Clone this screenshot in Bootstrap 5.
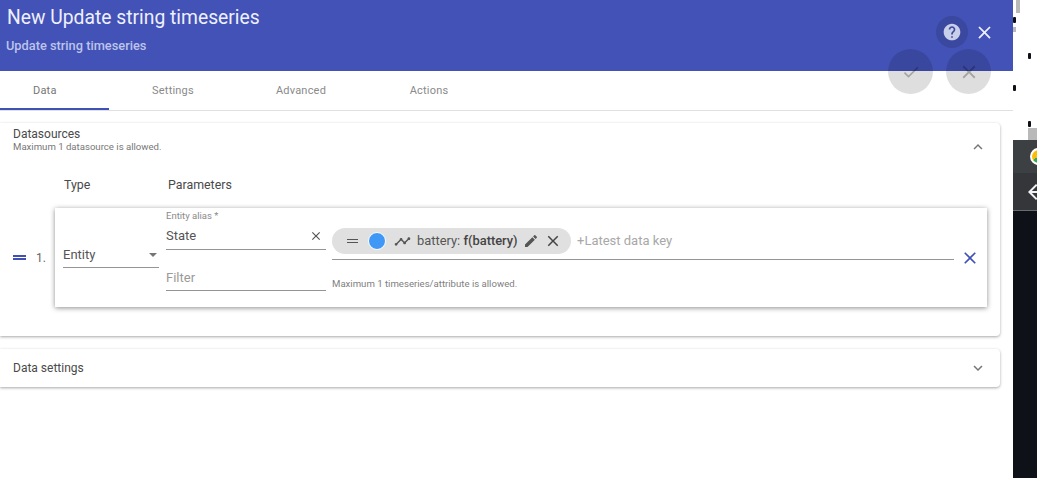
<!DOCTYPE html>
<html lang="en">
<head>
    <meta charset="UTF-8">
    <meta name="viewport" content="width=device-width, initial-scale=1.0">
    <title>New Update string timeseries</title>
    <link href="https://cdn.jsdelivr.net/npm/bootstrap@5.3.0/dist/css/bootstrap.min.css" rel="stylesheet">
    <style>
        html, body { height: 478px; overflow: hidden; background: #fff; }
        body { font-family: Roboto, "Liberation Sans", sans-serif; color: #333; }
        svg { fill: currentColor; display: block; flex: none; }
        .page-shell { height: 478px; }
        .dialog-main { width: 1013px; flex: none; position: relative; }
        .side-strip { width: 24px; flex: none; position: relative; background: #fff; overflow: hidden; }
        .strip-gap { height: 140px; }
        .strip-top { height: 33px; background: #3c4043; }
        .strip-mid { height: 38px; background: #35363a; color: #f1f3f4; border-bottom: 1px solid #6a6c70; }
        .strip-dark { flex: 1; background: #0e1118; }
        .strip-speck { position: absolute; background: #0e1118; width: 3px; height: 6px; border-radius: 1px; }
        .strip-noise { position: absolute; background: #b9b9b9; }
        .chrome-dot { width: 17px; height: 17px; margin: 8px 0 0 17px; border-radius: 50%; background: conic-gradient(#ea4335 0 33%, #34a853 33% 66%, #fbbc05 66% 100%); border: 2px solid #fff; }
        .dialog-head { height: 71px; background: #4352b7; color: #fff; padding: 6px 18px 0 7px; }
        .head-title { font-size: 19.3px; line-height: 24px; font-weight: 400; margin: 0; color: #eef0fb; }
        .head-sub { font-size: 12.8px; line-height: 16px; font-weight: 500; margin: 8px 0 0 -1px; color: #bcc4ea; }
        .head-actions { margin-top: 10px; gap: 6px; }
        .help-btn { width: 32px; height: 32px; background: #3b489f; border-radius: 50%; color: #c9cee9; }
        .close-btn { height: 32px; color: #eef0fb; }
        .fab-btn { position: absolute; top: 49px; width: 45px; height: 45px; padding: 0; border: 0; border-radius: 50%; background: rgba(0,0,0,.13); color: rgba(0,0,0,.26); }
        .fab-save { left: 888px; }
        .fab-cancel { left: 946px; }
        .tab-bar { height: 40px; border-bottom: 1px solid #e0e0e0; }
        .tab-item { width: 128px; height: 39px; font-size: 11px; letter-spacing: .2px; color: #8a8a8a; padding-top: 1px; }
        .tab-first { width: 109px; padding-left: 33px; padding-top: 3px; color: #757575; border-bottom: 2px solid #3f51b5; }
        .panel-wrap { padding: 12px 13px 0 0; }
        .ds-panel { border: 0; border-radius: 0 4px 4px 0; box-shadow: 0 1px 3px rgba(0,0,0,.35); }
        .ds-first { height: 213px; padding: 4px 13px 0; }
        .ds-second { height: 38px; margin-top: 13px; padding: 0 13px; }
        .panel-name { font-size: 12px; line-height: 14px; color: #4a4a4a; }
        .panel-hint { font-size: 9.6px; line-height: 11px; color: #777; }
        .chev { color: #757575; }
        .chev-up { margin: 11px 0 -4px 0; }
        .col-heads { margin: 26px 0 0 51px; font-size: 12.4px; line-height: 14px; color: #4a4a4a; }
        .col-type { width: 104px; }
        .key-row { margin-top: 16px; margin-left: 0; }
        .drag-lines { width: 13px; height: 5px; border-top: 2px solid #3f51b5; border-bottom: 2px solid #3f51b5; }
        .row-num { font-size: 12px; color: #666; width: 29px; padding-left: 10px; }
        .key-card { width: 932px; height: 99px; border: 0; border-radius: 0; box-shadow: 0 1px 5px rgba(0,0,0,.45); padding: 0 8px; }
        .key-card > div { flex: none; }
        .type-col { width: 96px; margin-right: 7px; margin-top: 37px; height: 23px; border-bottom: 1px solid #949494; font-size: 13px; color: #555; padding-bottom: 3px; }
        .caret-tri { width: 0; height: 0; border-left: 4.5px solid transparent; border-right: 4.5px solid transparent; border-top: 4px solid #757575; margin-right: 2px; }
        .alias-col { width: 160px; margin-right: 6px; }
        .alias-label { font-size: 9.5px; line-height: 10px; color: #8a8a8a; margin-top: 3px; }
        .alias-field { height: 29px; border-bottom: 1px solid #949494; font-size: 13px; color: #555; padding-top: 2px; }
        .filter-field { height: 27px; margin-top: 14px; border-bottom: 1px solid #949494; font-size: 13px; color: #9a9a9a; padding-top: 7px; line-height: 14px; }
        .alias-x { color: #555; margin-right: 3px; }
        .keys-col { width: 622px; padding-top: 20px; }
        .keys-field { height: 32px; border-bottom: 1px solid #949494; gap: 6px; }
        .key-chip { width: 239px; height: 26px; background: #e0e0e0; border-radius: 13px; padding-left: 15px; font-size: 12.9px; color: #555; }
        .chip-handle { width: 11px; height: 4px; border-top: 1px solid #555; border-bottom: 1px solid #555; }
        .chip-swatch { width: 18px; height: 18px; border-radius: 50%; background: #3f97f6; border: 1px solid #fff; margin-left: 10px; margin-right: 8px; }
        .chip-name { margin: 0 5px 0 6px; white-space: nowrap; }
        .chip-name b { font-weight: 500; color: #444; }
        .chip-x { margin-left: 5px; color: #444; }
        .key-input { font-size: 13px; line-height: 18px; color: #a8a8a8; margin-top: 4px; }
        .keys-hint { font-size: 9.6px; line-height: 12px; color: #808080; margin-top: 18px; }
        .remove-col { padding-top: 40px; }
        .remove-x { color: #3f51b5; margin-left: 6px; }
    </style>
</head>
<body>
    <div class="page-shell d-flex">
        <div class="dialog-main">
            <div class="dialog-head d-flex justify-content-between">
                <div>
                    <h1 class="head-title">New Update string timeseries</h1>
                    <p class="head-sub">Update string timeseries</p>
                </div>
                <div class="head-actions d-flex align-items-start">
                    <div class="help-btn d-flex align-items-center justify-content-center">
                        <svg width="20" height="20" viewBox="0 0 24 24"><path d="M12 2C6.48 2 2 6.48 2 12s4.48 10 10 10 10-4.48 10-10S17.52 2 12 2zm1 17h-2v-2h2v2zm2.07-7.75l-.9.92C13.45 12.9 13 13.5 13 15h-2v-.5c0-1.1.45-2.1 1.17-2.83l1.24-1.26c.37-.36.59-.86.59-1.41 0-1.1-.9-2-2-2s-2 .9-2 2H8c0-2.21 1.79-4 4-4s4 1.79 4 4c0 .88-.36 1.68-.93 2.25z"/></svg>
                    </div>
                    <div class="close-btn d-flex align-items-center">
                        <svg width="21" height="21" viewBox="0 0 24 24"><path d="M19 6.41L17.59 5 12 10.59 6.41 5 5 6.41 10.59 12 5 17.59 6.41 19 12 13.41 17.59 19 19 17.59 13.41 12z"/></svg>
                    </div>
                </div>
            </div>
            <button class="fab-btn fab-save d-flex align-items-center justify-content-center" type="button">
                <svg width="20" height="20" viewBox="0 0 24 24"><path d="M9 16.17L4.83 12l-1.42 1.41L9 19 21 7l-1.41-1.41z"/></svg>
            </button>
            <button class="fab-btn fab-cancel d-flex align-items-center justify-content-center" type="button">
                <svg width="22" height="22" viewBox="0 0 24 24"><path d="M19 6.41L17.59 5 12 10.59 6.41 5 5 6.41 10.59 12 5 17.59 6.41 19 12 13.41 17.59 19 19 17.59 13.41 12z"/></svg>
            </button>

            <div class="tab-bar d-flex">
                <div class="tab-item tab-first d-flex align-items-center">Data</div>
                <div class="tab-item d-flex align-items-center justify-content-center">Settings</div>
                <div class="tab-item d-flex align-items-center justify-content-center">Advanced</div>
                <div class="tab-item d-flex align-items-center justify-content-center">Actions</div>
            </div>

            <div class="panel-wrap">
                <div class="card ds-panel ds-first">
                    <div class="d-flex justify-content-between align-items-start">
                        <div>
                            <div class="panel-name">Datasources</div>
                            <div class="panel-hint">Maximum 1 datasource is allowed.</div>
                        </div>
                        <svg class="chev chev-up" width="18" height="18" viewBox="0 0 24 24"><path d="M12 8l-6 6 1.41 1.41L12 10.83l4.59 4.58L18 14z"/></svg>
                    </div>
                    <div class="col-heads d-flex">
                        <div class="col-type">Type</div>
                        <div>Parameters</div>
                    </div>
                    <div class="key-row d-flex align-items-center">
                        <div class="drag-lines"></div>
                        <div class="row-num">1.</div>
                        <div class="card key-card flex-row">
                            <div class="type-col d-flex justify-content-between align-items-center">
                                <span>Entity</span>
                                <span class="caret-tri"></span>
                            </div>
                            <div class="alias-col">
                                <div class="alias-label">Entity alias *</div>
                                <div class="alias-field d-flex justify-content-between align-items-center">
                                    <span>State</span>
                                    <svg class="alias-x" width="14" height="14" viewBox="0 0 24 24"><path d="M19 6.41L17.59 5 12 10.59 6.41 5 5 6.41 10.59 12 5 17.59 6.41 19 12 13.41 17.59 19 19 17.59 13.41 12z"/></svg>
                                </div>
                                <div class="filter-field">Filter</div>
                            </div>
                            <div class="keys-col">
                                <div class="keys-field d-flex align-items-start">
                                    <div class="key-chip d-flex align-items-center">
                                        <div class="chip-handle"></div>
                                        <div class="chip-swatch"></div>
                                        <svg width="17" height="17" viewBox="0 0 24 24"><path d="M23 8c0 1.1-.9 2-2 2-.18 0-.35-.02-.51-.07l-3.56 3.55c.05.16.07.34.07.52 0 1.1-.9 2-2 2s-2-.9-2-2c0-.18.02-.36.07-.52l-2.55-2.55c-.16.05-.34.07-.52.07s-.36-.02-.52-.07l-4.55 4.56c.05.16.07.33.07.51 0 1.1-.9 2-2 2s-2-.9-2-2 .9-2 2-2c.18 0 .35.02.51.07l4.56-4.55C8.02 9.36 8 9.18 8 9c0-1.1.9-2 2-2s2 .9 2 2c0 .18-.02.36-.07.52l2.55 2.55c.16-.05.34-.07.52-.07s.36.02.52.07l3.55-3.56C19.02 8.35 19 8.18 19 8c0-1.1.9-2 2-2s2 .9 2 2z"/></svg>
                                        <span class="chip-name">battery: <b>f(battery)</b></span>
                                        <svg width="16" height="16" viewBox="0 0 24 24"><path d="M3 17.25V21h3.75L17.81 9.94l-3.75-3.75L3 17.25zM20.71 7.04c.39-.39.39-1.02 0-1.41l-2.34-2.34c-.39-.39-1.02-.39-1.41 0l-1.83 1.83 3.75 3.75 1.83-1.83z"/></svg>
                                        <svg class="chip-x" width="18" height="18" viewBox="0 0 24 24"><path d="M19 6.41L17.59 5 12 10.59 6.41 5 5 6.41 10.59 12 5 17.59 6.41 19 12 13.41 17.59 19 19 17.59 13.41 12z"/></svg>
                                    </div>
                                    <span class="key-input">+Latest data key</span>
                                </div>
                                <div class="keys-hint">Maximum 1 timeseries/attribute is allowed.</div>
                            </div>
                            <div class="remove-col d-flex">
                                <svg class="remove-x" width="20" height="20" viewBox="0 0 24 24"><path d="M19 6.41L17.59 5 12 10.59 6.41 5 5 6.41 10.59 12 5 17.59 6.41 19 12 13.41 17.59 19 19 17.59 13.41 12z"/></svg>
                            </div>
                        </div>
                    </div>
                </div>
                <div class="card ds-panel ds-second flex-row justify-content-between align-items-center">
                    <div class="panel-name">Data settings</div>
                    <svg class="chev" width="18" height="18" viewBox="0 0 24 24"><path d="M16.59 8.59L12 13.17 7.41 8.59 6 10l6 6 6-6z"/></svg>
                </div>
            </div>
        </div>
        <div class="side-strip d-flex flex-column">
            <span class="strip-noise" style="left:3px;top:0;width:4px;height:13px"></span>
            <span class="strip-noise" style="left:0;top:27px;width:3px;height:5px"></span>
            <span class="strip-noise" style="left:15px;top:128px;width:9px;height:12px"></span>
            <span class="strip-speck" style="left:0;top:17px"></span>
            <span class="strip-speck" style="left:15px;top:53px"></span>
            <span class="strip-speck" style="left:0;top:85px"></span>
            <span class="strip-speck" style="left:15px;top:121px"></span>
            <div class="strip-gap"></div>
            <div class="strip-top"><div class="chrome-dot"></div></div>
            <div class="strip-mid d-flex align-items-center">
                <svg width="24" height="24" viewBox="0 0 24 24" style="margin-left:11px"><path d="M20 11H7.83l5.59-5.59L12 4l-8 8 8 8 1.41-1.41L7.83 13H20z"/></svg>
            </div>
            <div class="strip-dark"></div>
        </div>
    </div>
    <script src="https://cdn.jsdelivr.net/npm/bootstrap@5.3.0/dist/js/bootstrap.bundle.min.js"></script>
</body>
</html>
